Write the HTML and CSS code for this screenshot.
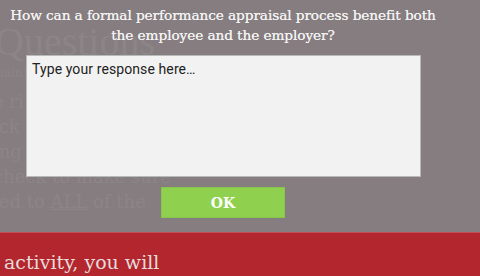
FILE: index.html
```html
<!DOCTYPE html>
<html lang="en">
<head>
  <meta charset="UTF-8">
  <meta name="viewport" content="width=device-width, initial-scale=1.0">
  <title>Questions</title>
  <link rel="stylesheet" href="styles.css">
</head>
<body>
  <div class="page">
    <h1 class="title">Questions</h1>
    <p class="sub">(main)</p>
    <div class="body-text">
      <p>e ri</p>
      <p>ick</p>
      <p>ing</p>
      <p>check to make sure</p>
      <p>led to <u>ALL</u> of the</p>
    </div>
    <div class="footer">activity, you will</div>
  </div>

  <div class="modal">
    <p class="question">How can a formal performance appraisal process benefit both the employee and the employer?</p>
    <textarea class="response" placeholder="Type your response here…"></textarea>
    <button class="ok">OK</button>
  </div>
</body>
</html>
```

FILE: styles.css
```css
html, body {
  margin: 0;
  height: 100%;
}
body {
  background: #867d80;
  overflow: hidden;
  font-family: "DejaVu Serif", serif;
}
.page {
  display: flex;
  flex-direction: column;
  height: 276px;
  color: #8c8587;
}
.title {
  margin: 22px 0 0 -5px;
  font-family: "Liberation Serif", serif;
  font-size: 40px;
  font-weight: normal;
  line-height: 40px;
}
.sub {
  margin: 4px 0 0 -12px;
  font-size: 12px;
}
.body-text {
  margin: 9px 0 0 -7px;
  font-size: 18px;
}
.body-text p {
  margin: 0;
  line-height: 25px;
}
.footer {
  margin-top: auto;
  height: 44px;
  background: #b3262d;
  border-top: 1px solid #c24d52;
  color: #e6dcdc;
  font-size: 19px;
  line-height: 30px;
  padding: 14px 0 0 4px;
  box-sizing: border-box;
}
.modal {
  position: absolute;
  top: 0;
  left: 0;
  right: 0;
  display: flex;
  flex-direction: column;
  align-items: center;
}
.question {
  margin: 5px 0 0 -34px;
  width: 440px;
  text-align: center;
  color: #f2f2f2;
  font-size: 13.7px;
  letter-spacing: -0.1px;
  line-height: 20px;
  text-shadow: 0 0 0.6px #f2f2f2;
}
.response {
  margin: 10px 0 0 -33px;
  width: 395px;
  height: 122px;
  box-sizing: border-box;
  background: #f2f2f2;
  border: 1px solid #b9b9b9;
  border-radius: 0;
  padding: 5px 5px;
  font-family: Roboto, sans-serif;
  font-size: 14px;
  letter-spacing: 0.1px;
  resize: none;
}
.response::placeholder {
  color: #222;
  opacity: 1;
}
.ok {
  margin: 10px 0 0 -34px;
  width: 124px;
  height: 31px;
  background: #8fd14f;
  border: 1px solid #86c64a;
  color: #fff;
  font-family: "DejaVu Serif", serif;
  font-weight: bold;
  font-size: 14px;
}
```
